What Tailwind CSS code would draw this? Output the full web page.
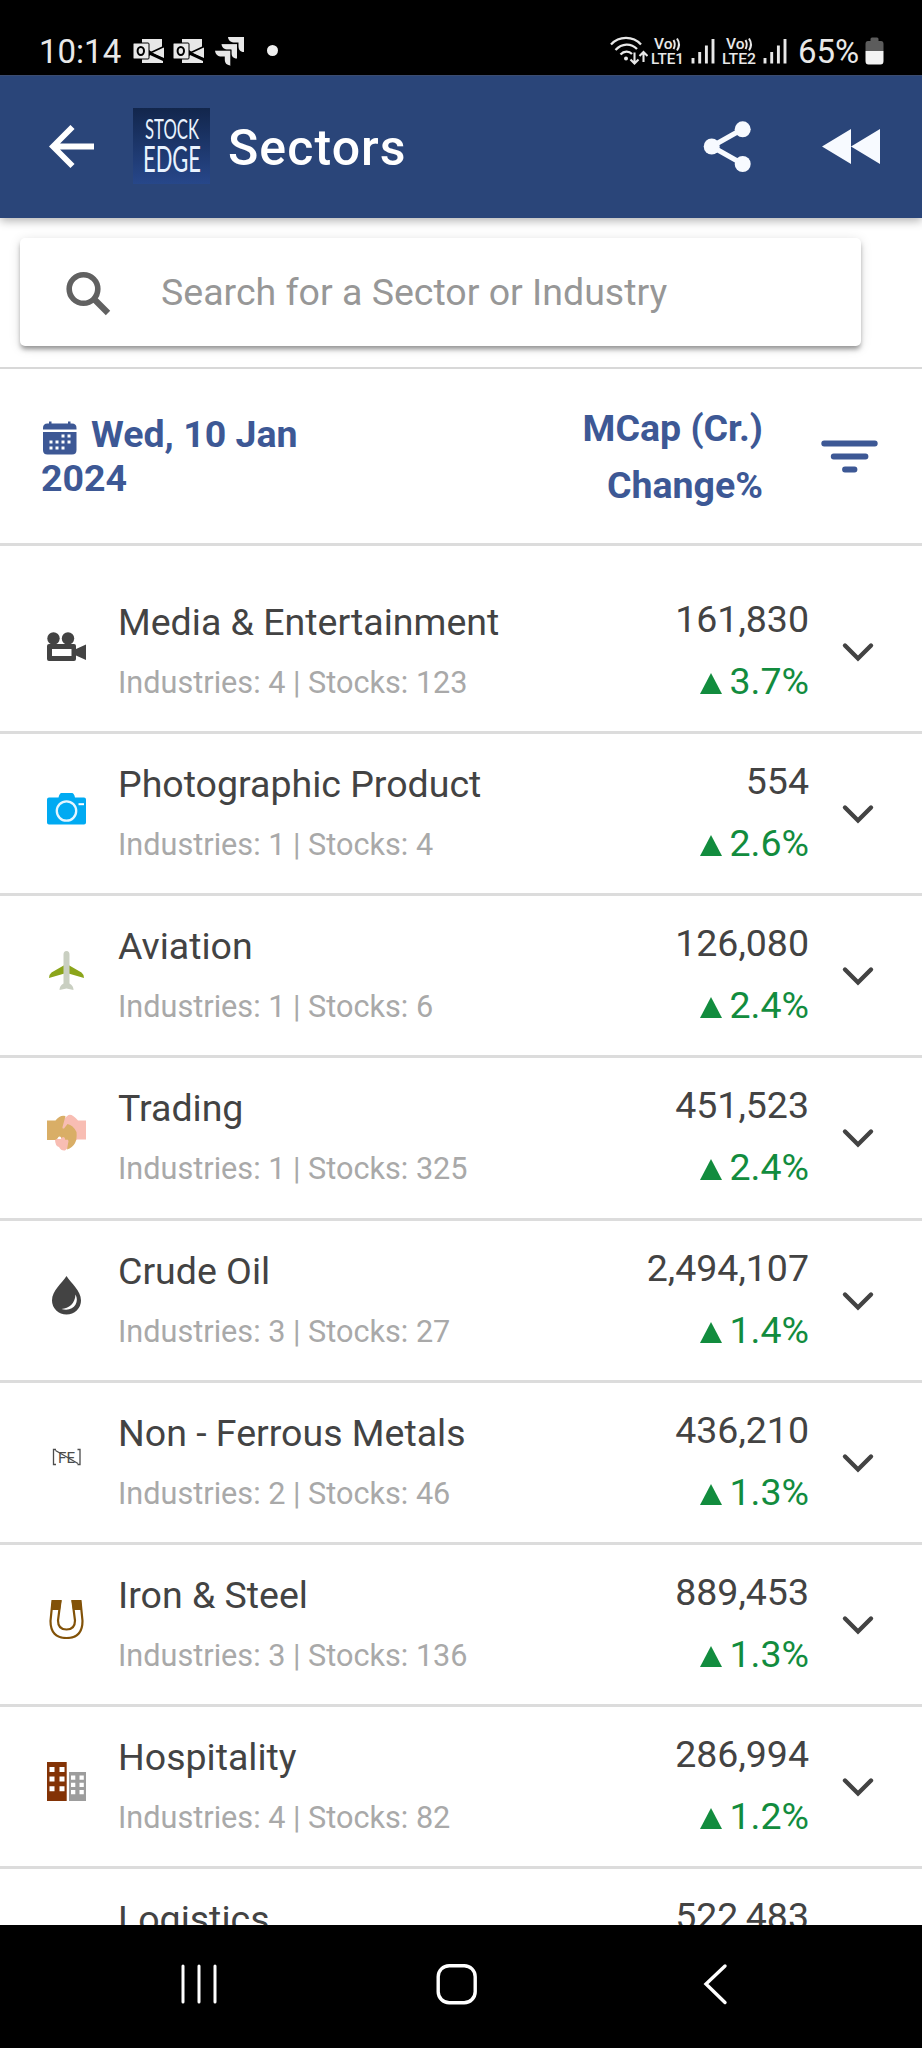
<!DOCTYPE html>
<html lang="en">
<head>
<meta charset="utf-8">
<title>Sectors</title>
<script src="https://cdn.jsdelivr.net/npm/@tailwindcss/browser@4"></script>
</head>
<body class="bg-black">
<svg width="0" height="0" class="absolute">
  <symbol id="chev" viewBox="0 0 34 22"><path d="M4 4.500 17 17.500 30 4.500" fill="none" stroke="#434343" stroke-width="4.400" stroke-linecap="round" stroke-linejoin="miter"/></symbol>
  <symbol id="up" viewBox="0 0 22 21"><path d="M11 0 22 21H0z" fill="#128c3e"/></symbol>
  <symbol id="mail" viewBox="0 0 32 26">
    <path d="M9 1H29V12L20 15 16 12V6H9z" fill="#e8e8e8"/>
    <path d="M17 14 31 20V9L17 15zM9 21H14L17 17 30 23V25H9z" fill="#e8e8e8"/>
    <path d="M17 14.500 31 21.500M17 15 31 8.500" stroke="#000" stroke-width="1.800"/>
    <rect x="0" y="5" width="16" height="16" rx="1" fill="#e8e8e8" stroke="#000" stroke-width="1"/>
    <ellipse cx="7.800" cy="13" rx="3.200" ry="3.900" fill="none" stroke="#000" stroke-width="2"/>
  </symbol>
  <symbol id="bars" viewBox="0 0 24 26"><path d="M2 20V25.500M8.700 14V25.500M15.400 7.500V25.500M22 1V25.500" stroke="#e8e8e8" stroke-width="2.900"/></symbol>
</svg>
<div class="w-[922px] h-[2048px] flex flex-col overflow-hidden bg-white font-[Roboto,sans-serif] text-[#434343]">

  <!-- status bar -->
  <div class="h-[75px] shrink-0 bg-black text-[#e8e8e8] flex items-start pt-[32px] pl-[39px] pr-[38px]">
    <span class="text-[33px] leading-[40px] w-[94px]">10:14</span>
    <svg class="w-[32px] h-[26px] mt-[6px]"><use href="#mail"/></svg>
    <svg class="w-[32px] h-[26px] mt-[6px] ml-[8px]"><use href="#mail"/></svg>
    <svg class="w-[30px] h-[30px] mt-[4px] ml-[10px]" viewBox="0 0 30 30" fill="#e8e8e8">
      <path d="M13 1H29V16C25 16 23.500 13.500 23.500 10V6.500H20C16 6.500 13.500 5 13 1z"/>
      <path d="M6.500 8H22V22.500C18 22.500 16.500 20 16.500 17V13.500H13C9.500 13.500 7 12 6.500 8z"/>
      <path d="M0 14.500H15.500V29.500C11.500 29 9.800 27 9.800 23.500V20.500H6.500C3 20.500 0.500 18.500 0 14.500z"/>
      <path d="M22.500 7.500V22M15.800 14V29M6 7.700H22.500M0 14.200H16" stroke="#000" stroke-width=".6" fill="none"/>
    </svg>
    <span class="w-[11px] h-[11px] rounded-full bg-[#efefef] mt-[13px] ml-[22px]"></span>
    <svg class="w-[38px] h-[30px] mt-[4px] ml-auto" viewBox="0 0 38 30" fill="none" stroke="#e8e8e8" stroke-width="2.300">
      <path d="M1 8.500C9-.3 23-.3 31 8.500M5.500 14C12 7 21 7 27 13M10.500 18.500C14 14.800 19 14.800 22 18"/>
      <circle cx="16" cy="22.500" r="2" fill="#e8e8e8" stroke="none"/>
      <path d="M24.500 16.500V27M20.500 23.500 24.500 27.500 28.500 23.500M33.500 26V16.500M29.500 20 33.500 16 37.500 20" stroke-width="2.100"/>
    </svg>
    <svg class="w-[34px] h-[30px] mt-[4px] ml-[3px] overflow-visible" viewBox="0 0 34 30" fill="#e8e8e8" font-family="Roboto" font-weight="500">
      <text x="3" y="13" font-size="15" textLength="18.500" lengthAdjust="spacingAndGlyphs">Vo</text>
      <path d="M22.500 4Q25 8.500 22.500 13M26 2.500Q30 8.500 26 14.500" fill="none" stroke="#e8e8e8" stroke-width="2"/>
      <text x="0" y="28" font-size="15" textLength="33" lengthAdjust="spacingAndGlyphs">LTE1</text>
    </svg>
    <svg class="w-[24px] h-[26px] mt-[6px] ml-[6px]"><use href="#bars"/></svg>
    <svg class="w-[34px] h-[30px] mt-[4px] ml-[7px] overflow-visible" viewBox="0 0 34 30" fill="#e8e8e8" font-family="Roboto" font-weight="500">
      <text x="4" y="13" font-size="15" textLength="18.500" lengthAdjust="spacingAndGlyphs">Vo</text>
      <path d="M23.500 4Q26 8.500 23.500 13M27 2.500Q31 8.500 27 14.500" fill="none" stroke="#e8e8e8" stroke-width="2"/>
      <text x="0" y="28" font-size="15" textLength="34" lengthAdjust="spacingAndGlyphs">LTE2</text>
    </svg>
    <svg class="w-[24px] h-[26px] mt-[6px] ml-[7px]"><use href="#bars"/></svg>
    <span class="text-[33px] leading-[40px] ml-[11px] w-[61px]">65%</span>
    <svg class="w-[19px] h-[28px] mt-[5px] ml-[6px]" viewBox="0 0 19 28">
      <path d="M5.500 4V2Q5.500 0.500 7 0.500H12Q13.500 0.500 13.500 2V4H16Q18.500 4 18.500 7V14H.5V7Q.5 4 3 4z" fill="#5c5c5c"/>
      <path d="M.5 14H18.500V24Q18.500 27.500 15.500 27.500H3.500Q.5 27.500 .5 24z" fill="#f2f2f2"/>
    </svg>
  </div>

  <!-- app bar -->
  <header class="relative z-10 h-[143px] shrink-0 bg-[#2a4579] border-t border-[#3b4c70] flex items-start shadow-[0_3px_9px_rgba(0,0,0,0.3)]">
    <svg class="w-[46px] h-[44px] mt-[49px] ml-[49px]" viewBox="0 0 46 44" fill="none" stroke="#fff" stroke-width="5.800"><path d="M45 21.500H4M23.500 2 4 21.500 23.500 41"/></svg>
    <svg class="w-[77px] h-[76px] mt-[32px] ml-[38px] overflow-visible" viewBox="0 0 77 76" fill="#e9f3ff" font-family="Lato, sans-serif">
      <defs><linearGradient id="lg" x1="0" y1="0" x2="0" y2="1"><stop offset="0" stop-color="#12264c"/><stop offset="1" stop-color="#27478a"/></linearGradient></defs>
      <rect width="77" height="76" fill="url(#lg)"/>
      <text x="12" y="30.500" font-size="26" textLength="54" lengthAdjust="spacingAndGlyphs">STOCK</text>
      <text x="10" y="64" font-size="37" textLength="58" lengthAdjust="spacingAndGlyphs">EDGE</text>
    </svg>
    <h1 class="text-[50px] leading-[60px] tracking-[1.100px] font-medium text-white mt-[42px] ml-[18px]">Sectors</h1>
    <svg class="w-[48px] h-[52px] mt-[45px] ml-auto mr-[71px]" viewBox="0 0 48 52" fill="#f7faff"><path d="M8.700 25.500 39.700 8M8.700 25.500 39.700 43" stroke="#f7faff" stroke-width="5"/><circle cx="8.700" cy="25.500" r="8"/><circle cx="39.700" cy="8.300" r="8"/><circle cx="39.700" cy="43" r="8"/></svg>
    <svg class="w-[58px] h-[35px] mt-[53px] mr-[42px]" viewBox="0 0 58 35" fill="#f7faff"><path d="M29 0V35L0 17.500zM58 0V35L29 17.500z"/></svg>
  </header>

  <!-- search -->
  <div class="h-[151px] shrink-0 border-b-[2px] border-[#d8d8d8] pt-[20px] pl-[20px]">
    <div class="w-[841px] h-[108px] rounded-[5px] bg-white flex items-start shadow-[0_4px_5px_-1px_rgba(0,0,0,0.38),0_2px_12px_rgba(0,0,0,0.13)]">
      <svg class="w-[46px] h-[46px] mt-[32px] ml-[45px]" viewBox="0 0 46 46" fill="none" stroke="#616161" stroke-width="5.600"><circle cx="18.500" cy="19" r="14.300"/><path d="M28.500 28.500 43 43" stroke-width="6.200"/></svg>
      <span class="text-[37.500px] leading-[44px] text-[#979797] mt-[32px] ml-[50px] whitespace-nowrap">Search for a Sector or Industry</span>
    </div>
  </div>

  <!-- date and column titles -->
  <div class="h-[177px] shrink-0 border-b-[3px] border-[#dcdcdc] flex items-start text-[37.500px] font-bold text-[#3d5895]">
    <div class="w-[300px] pl-[41px] pt-[43px] leading-[44px]">
      <div class="flex items-start"><svg class="w-[34px] h-[34px] mt-[9px] ml-[2px] mr-[14px]" viewBox="0 0 34 34" fill="#3d5895">
        <path d="M0 8.500V7Q0 2.500 4.500 2.500H6V.5H8.500V2.500H25V.5H27.500V2.500H29Q33.500 2.500 33.500 7V8.500zM0 11H33.500V29Q33.500 33.500 29 33.500H4.500Q0 33.500 0 29z"/>
        <g fill="#fff"><path d="M18.500 13.500h3v3h-3zM24.500 13.500h3v3h-3zM6.500 19.500h3v3h-3zM12.500 19.500h3v3h-3zM18.500 19.500h3v3h-3zM24.500 19.500h3v3h-3zM6.500 25.500h3v3h-3zM12.500 25.500h3v3h-3zM18.500 25.500h3v3h-3z"/></g>
      </svg><span class="whitespace-nowrap">Wed, 10 Jan</span></div>
      <div>2024</div>
    </div>
    <div class="w-[463px] text-right leading-[57px] pt-[31px]"><div>MCap (Cr.)</div><div>Change%</div></div>
    <svg class="w-[58px] h-[34px] mt-[71px] ml-[58px]" viewBox="0 0 58 34" stroke="#3d5895" stroke-width="5.800" stroke-linecap="round"><path d="M3.200 3.500H53.800M12.700 16.500H44.500M24 29.500H33.500"/></svg>
  </div>

  <!-- sector list -->
  <main class="flex-1 min-h-0 overflow-hidden pt-[26px]">
    <div class="h-[162.140px] border-b-[3px] border-[#dcdcdc] flex items-start">
      <svg class="w-[39px] h-[39px] mt-[55px] ml-[47px]" viewBox="0 0 39 39" fill="#434343"><circle cx="6.500" cy="11.500" r="6.200"/><circle cx="21" cy="11.500" r="6.200"/><path d="M2 17H27Q29 17 29 19V22L39 17.500V33L29 28.500V32Q29 34 27 34H2Q0 34 0 32V19Q0 17 2 17z"/><path d="M5 22H24.500V29H5z" fill="#fff"/></svg>
      <div class="ml-[32px] mt-[28px] flex-1"><div class="text-[37.500px] leading-[44px]">Media &amp; Entertainment</div><div class="text-[30.650px] leading-[40px] mt-[19px] text-[#a9a9a9]">Industries: 4 | Stocks: 123</div></div>
      <div class="mt-[25px] text-right text-[37.500px] leading-[44px]"><div>161,830</div><div class="mt-[18px] flex justify-end text-[#128c3e]"><svg class="w-[22px] h-[21px] mt-[14px] mr-[7px]"><use href="#up"/></svg>3.7%</div></div>
      <svg class="w-[34px] h-[22px] mt-[69px] ml-[32px] mr-[47px]"><use href="#chev"/></svg>
    </div>
    <div class="h-[162.140px] border-b-[3px] border-[#dcdcdc] flex items-start">
      <svg class="w-[39px] h-[39px] mt-[55px] ml-[47px]" viewBox="0 0 39 39"><path d="M2 8.500H11.500Q12.500 4 14.500 4H25Q27 4 28 8.500H37Q39 8.500 39 10.500V33.500Q39 35.500 37 35.500H2Q0 35.500 0 33.500V10.500Q0 8.500 2 8.500z" fill="#00aaf2"/><circle cx="19.500" cy="22" r="9.700" fill="none" stroke="#e4f6ff" stroke-width="2.300"/><path d="M31.500 15.200H37" stroke="#fff" stroke-width="2"/></svg>
      <div class="ml-[32px] mt-[28px] flex-1"><div class="text-[37.500px] leading-[44px]">Photographic Product</div><div class="text-[30.650px] leading-[40px] mt-[19px] text-[#a9a9a9]">Industries: 1 | Stocks: 4</div></div>
      <div class="mt-[25px] text-right text-[37.500px] leading-[44px]"><div>554</div><div class="mt-[18px] flex justify-end text-[#128c3e]"><svg class="w-[22px] h-[21px] mt-[14px] mr-[7px]"><use href="#up"/></svg>2.6%</div></div>
      <svg class="w-[34px] h-[22px] mt-[69px] ml-[32px] mr-[47px]"><use href="#chev"/></svg>
    </div>
    <div class="h-[162.140px] border-b-[3px] border-[#dcdcdc] flex items-start">
      <svg class="w-[39px] h-[39px] mt-[55px] ml-[47px]" viewBox="0 0 39 39"><path d="M17.500 14 4.500 21.500Q2 23.500 2 27L17.500 22.500zM21.500 14 34.500 21.500Q37 23.500 37 27L21.500 22.500z" fill="#8ba51a"/><path d="M16.500 3.500Q16.500 0 19.500 0T22.500 3.500V32.500Q26.500 34.500 26.500 39L19.500 37.500 12.500 39Q12.500 34.500 16.500 32.500z" fill="#c9cfc1"/></svg>
      <div class="ml-[32px] mt-[28px] flex-1"><div class="text-[37.500px] leading-[44px]">Aviation</div><div class="text-[30.650px] leading-[40px] mt-[19px] text-[#a9a9a9]">Industries: 1 | Stocks: 6</div></div>
      <div class="mt-[25px] text-right text-[37.500px] leading-[44px]"><div>126,080</div><div class="mt-[18px] flex justify-end text-[#128c3e]"><svg class="w-[22px] h-[21px] mt-[14px] mr-[7px]"><use href="#up"/></svg>2.4%</div></div>
      <svg class="w-[34px] h-[22px] mt-[69px] ml-[32px] mr-[47px]"><use href="#chev"/></svg>
    </div>
    <div class="h-[162.140px] border-b-[3px] border-[#dcdcdc] flex items-start">
      <svg class="w-[39px] h-[39px] mt-[55px] ml-[47px]" viewBox="0 0 39 39"><path d="M39 7.500H31Q25 .5 21.500 2L14 8V26H8Q8 33 12 34 14 38 18 37.500L30 26.500H39z" fill="#f8bdb3"/><path d="M0 7.500H8.500Q13 1.500 18.500 3L15.500 14Q15 16 17 15.500L20.500 11Q26 12 29.500 19 31 33 20 36.500L21.500 28Q21 25.500 18.500 27 17.500 22.500 14.500 25 12 22 10.500 25.500L8 27H0z" fill="#d9ae66"/></svg>
      <div class="ml-[32px] mt-[28px] flex-1"><div class="text-[37.500px] leading-[44px]">Trading</div><div class="text-[30.650px] leading-[40px] mt-[19px] text-[#a9a9a9]">Industries: 1 | Stocks: 325</div></div>
      <div class="mt-[25px] text-right text-[37.500px] leading-[44px]"><div>451,523</div><div class="mt-[18px] flex justify-end text-[#128c3e]"><svg class="w-[22px] h-[21px] mt-[14px] mr-[7px]"><use href="#up"/></svg>2.4%</div></div>
      <svg class="w-[34px] h-[22px] mt-[69px] ml-[32px] mr-[47px]"><use href="#chev"/></svg>
    </div>
    <div class="h-[162.140px] border-b-[3px] border-[#dcdcdc] flex items-start">
      <svg class="w-[39px] h-[39px] mt-[55px] ml-[47px]" viewBox="0 0 39 39"><path d="M19.500 0C24 7 34 14.500 34 24.500A14.500 14 0 0 1 5 24.500C5 14.500 15 7 19.500 0z" fill="#434343"/><path d="M28.500 18.500C33 26.500 26 36.500 14.500 33 22 32.500 28 27.500 28.500 18.500z" fill="#fff"/></svg>
      <div class="ml-[32px] mt-[28px] flex-1"><div class="text-[37.500px] leading-[44px]">Crude Oil</div><div class="text-[30.650px] leading-[40px] mt-[19px] text-[#a9a9a9]">Industries: 3 | Stocks: 27</div></div>
      <div class="mt-[25px] text-right text-[37.500px] leading-[44px]"><div>2,494,107</div><div class="mt-[18px] flex justify-end text-[#128c3e]"><svg class="w-[22px] h-[21px] mt-[14px] mr-[7px]"><use href="#up"/></svg>1.4%</div></div>
      <svg class="w-[34px] h-[22px] mt-[69px] ml-[32px] mr-[47px]"><use href="#chev"/></svg>
    </div>
    <div class="h-[162.140px] border-b-[3px] border-[#dcdcdc] flex items-start">
      <svg class="w-[39px] h-[39px] mt-[55px] ml-[47px]" viewBox="0 0 39 39" fill="none" stroke="#4c4c4c" stroke-width="1.300"><path d="M9 11.500H6.500V26.500H9M30.500 11.500H33V26.500H30.500M8.500 12.500 31 25.500"/><text x="11" y="24.500" font-family="Roboto" font-size="15" textLength="17" lengthAdjust="spacingAndGlyphs" fill="#4c4c4c" stroke="none">FE</text></svg>
      <div class="ml-[32px] mt-[28px] flex-1"><div class="text-[37.500px] leading-[44px]">Non - Ferrous Metals</div><div class="text-[30.650px] leading-[40px] mt-[19px] text-[#a9a9a9]">Industries: 2 | Stocks: 46</div></div>
      <div class="mt-[25px] text-right text-[37.500px] leading-[44px]"><div>436,210</div><div class="mt-[18px] flex justify-end text-[#128c3e]"><svg class="w-[22px] h-[21px] mt-[14px] mr-[7px]"><use href="#up"/></svg>1.3%</div></div>
      <svg class="w-[34px] h-[22px] mt-[69px] ml-[32px] mr-[47px]"><use href="#chev"/></svg>
    </div>
    <div class="h-[162.140px] border-b-[3px] border-[#dcdcdc] flex items-start">
      <svg class="w-[39px] h-[39px] mt-[55px] ml-[47px]" viewBox="0 0 39 39"><path d="M5.500 1H13.500L11 20.500Q11 29.500 19.500 29.500T28 20.500L25.500 1H33.500L35.500 21Q35.500 38 19.500 38T3.500 21z" fill="#fff" stroke="#825208" stroke-width="2.200"/><path d="M5 .5H14.500L13 10H4zM24.500 .5H34L35 10H26z" fill="#825208"/></svg>
      <div class="ml-[32px] mt-[28px] flex-1"><div class="text-[37.500px] leading-[44px]">Iron &amp; Steel</div><div class="text-[30.650px] leading-[40px] mt-[19px] text-[#a9a9a9]">Industries: 3 | Stocks: 136</div></div>
      <div class="mt-[25px] text-right text-[37.500px] leading-[44px]"><div>889,453</div><div class="mt-[18px] flex justify-end text-[#128c3e]"><svg class="w-[22px] h-[21px] mt-[14px] mr-[7px]"><use href="#up"/></svg>1.3%</div></div>
      <svg class="w-[34px] h-[22px] mt-[69px] ml-[32px] mr-[47px]"><use href="#chev"/></svg>
    </div>
    <div class="h-[162.140px] border-b-[3px] border-[#dcdcdc] flex items-start">
      <svg class="w-[39px] h-[39px] mt-[55px] ml-[47px]" viewBox="0 0 39 39"><path d="M0 0H19.700V39H0z" fill="#833306"/><path d="M22 10H39V39H22z" fill="#9d9d9d"/><path d="M2.500 5h5v5h-5zM12.500 5h5v5h-5zM2.500 14.500h5v5h-5zM12.500 14.500h5v5h-5zM2.500 24.200h5v5h-5zM12.500 24.200h5v5h-5zM24 13.500h4.300v4.300H24zM32.500 13.500h4.300v4.300H32.500zM24 20.700h4.300V25H24zM32.500 20.700h4.300V25H32.500zM24 28h4.300v4.300H24zM32.500 28h4.300v4.300H32.500z" fill="#fff"/></svg>
      <div class="ml-[32px] mt-[28px] flex-1"><div class="text-[37.500px] leading-[44px]">Hospitality</div><div class="text-[30.650px] leading-[40px] mt-[19px] text-[#a9a9a9]">Industries: 4 | Stocks: 82</div></div>
      <div class="mt-[25px] text-right text-[37.500px] leading-[44px]"><div>286,994</div><div class="mt-[18px] flex justify-end text-[#128c3e]"><svg class="w-[22px] h-[21px] mt-[14px] mr-[7px]"><use href="#up"/></svg>1.2%</div></div>
      <svg class="w-[34px] h-[22px] mt-[69px] ml-[32px] mr-[47px]"><use href="#chev"/></svg>
    </div>
    <div class="flex items-start">
      <div class="ml-[118px] mt-[28px] flex-1 text-[37.500px] leading-[44px]">Logistics</div>
      <div class="mt-[25px] mr-[113px] text-[37.500px] leading-[44px]">522,483</div>
    </div>
  </main>

  <!-- navigation bar -->
  <nav class="h-[123px] shrink-0 bg-black flex items-start pt-[38px] pl-[181px]">
    <svg class="w-[36px] h-[42px]" viewBox="0 0 36 42" stroke="#fff" stroke-width="3" stroke-linecap="round"><path d="M2 3V39M18 3V39M34 3V39"/></svg>
    <svg class="w-[42px] h-[42px] ml-[219px]" viewBox="0 0 42 42" fill="none" stroke="#fff" stroke-width="3.400"><rect x="2.200" y="2.700" width="37" height="37" rx="11"/></svg>
    <svg class="w-[26px] h-[44px] ml-[224px]" viewBox="0 0 26 44" fill="none" stroke="#fff" stroke-width="3.400" stroke-linecap="round"><path d="M23 3 4 21 23 39.500"/></svg>
  </nav>
</div>
</body>
</html>
